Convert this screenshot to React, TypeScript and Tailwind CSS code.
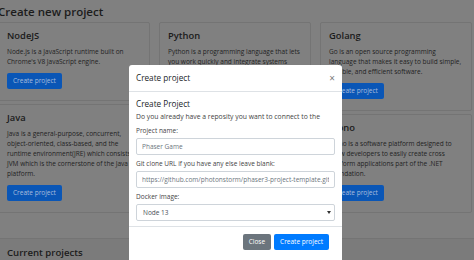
import React from 'react';

type Project = {
  name: string;
  lines: string[];
};

// masonry columns, as the page lays them out
const columns: Project[][] = [
  [
    {
      name: 'NodeJS',
      lines: ['Node.js is a JavaScript runtime built on', "Chrome's V8 JavaScript engine."],
    },
    {
      name: 'Java',
      lines: [
        'Java is a general-purpose, concurrent,',
        'object-oriented, class-based, and the',
        'runtime environment(JRE) which consists of',
        'JVM which is the cornerstone of the Java',
        'platform.',
      ],
    },
  ],
  [
    {
      name: 'Python',
      lines: [
        'Python is a programming language that lets',
        'you work quickly and integrate systems',
        'more effectively.',
      ],
    },
  ],
  [
    {
      name: 'Golang',
      lines: [
        'Go is an open source programming',
        'language that makes it easy to build simple,',
        'reliable, and efficient software.',
      ],
    },
    {
      name: 'Mono',
      lines: [
        'Mono is a software platform designed to',
        'allow developers to easily create cross',
        'platform applications part of the .NET',
        'Foundation.',
      ],
    },
  ],
];

const ProjectCard = ({ project }: { project: Project }) => (
  <div className="border border-[#747474] rounded-[2px] px-[8px] pt-[7px] pb-[11px]">
    <h5 className="text-[9.4px] leading-[12px] font-semibold text-[#1b1b1b] mb-[5px]">{project.name}</h5>
    <div className="text-[6.5px] leading-[10px] text-[#222]">
      {project.lines.map((line) => (
        <div key={line} className="whitespace-nowrap">{line}</div>
      ))}
    </div>
    <button className="block mt-[6px] h-[16px] px-[6px] rounded-[2px] bg-[#0a56b6] text-[6.5px] leading-[16px] text-[#a9bddc]">
      Create project
    </button>
  </div>
);

export default function App() {
  return (
    <div className="relative w-[474px] h-[260px] overflow-hidden bg-[#808080] font-['Open_Sans',sans-serif]">
      {/* Page underneath the backdrop */}
      <div className="ml-[-2px] pt-[5px]">
        <h2 className="text-[11.5px] leading-[14px] font-semibold text-[#1c1c1c]">Create new project</h2>
        <div className="mt-[3px] grid grid-cols-[152px_152px_152px] gap-x-[9px] items-start">
          {columns.map((col, i) => (
            <div key={i} className="flex flex-col gap-[3px]">
              {col.map((p) => (
                <ProjectCard key={p.name} project={p} />
              ))}
            </div>
          ))}
        </div>
        <div className="mt-[25px] border-t border-[#747474] bg-[#7b7b7b] pt-[8px] pl-[9px] h-[40px]">
          <h4 className="text-[9.6px] leading-[12px] font-semibold text-[#1c1c1c]">Current projects</h4>
        </div>
      </div>

      {/* Modal */}
      <div className="absolute left-[129px] top-[65px] w-[213px] bg-white rounded-[3px]">
        <div className="h-[27px] flex items-center justify-between px-[7px] border-b border-[#dee2e6]">
          <h5 className="text-[8.2px] font-medium text-[#212529]">Create project</h5>
          <button className="text-[10px] leading-none text-[#7a7a7a]">×</button>
        </div>
        <div className="px-[7px] pt-[7px] pb-[5px]">
          <h5 className="text-[8.2px] leading-[10px] font-medium text-[#212529] mb-[3px]">Create Project</h5>
          <p className="text-[6.8px] leading-[10px] text-[#444] whitespace-nowrap mb-[4px]">
            Do you already have a reposity you want to connect to the
          </p>
          <label className="block text-[6.5px] leading-[10px] text-[#444] mb-[2px]">Project name:</label>
          <input
            className="block w-full h-[17px] px-[5px] border border-[#ced4da] rounded-[2px] text-[6.5px] text-[#495057] placeholder:text-[#6c757d] outline-none mb-[4px]"
            placeholder="Phaser Game"
          />
          <label className="block text-[6.5px] leading-[10px] text-[#444] mb-[2px]">
            Git clone URL if you have any else leave blank:
          </label>
          <input
            className="block w-full h-[17px] px-[5px] border border-[#ced4da] rounded-[2px] text-[6.5px] text-[#495057] placeholder:text-[#6c757d] outline-none mb-[4px]"
            placeholder="https://github.com/photonstorm/phaser3-project-template.git"
          />
          <label className="block text-[6.5px] leading-[10px] text-[#444] mb-[2px]">Docker image:</label>
          <div className="relative">
            <select className="block w-full h-[17px] pl-[6px] border border-[#ced4da] rounded-[2px] text-[6.5px] text-[#495057] appearance-none bg-white outline-none">
              <option>Node 13</option>
            </select>
            <span className="absolute right-[4px] top-[7px] w-0 h-0 border-l-[2px] border-r-[2px] border-t-[3px] border-l-transparent border-r-transparent border-t-[#333]" />
          </div>
        </div>
        <div className="border-t border-[#dee2e6] pt-[7px] pb-[12px] pr-[13px] flex justify-end gap-[3px]">
          <button className="h-[16px] px-[6px] rounded-[2px] bg-[#6c757d] text-white text-[6.5px]">Close</button>
          <button className="h-[16px] px-[6px] rounded-[2px] bg-[#007bff] text-white text-[6.5px]">Create project</button>
        </div>
      </div>
    </div>
  );
}
